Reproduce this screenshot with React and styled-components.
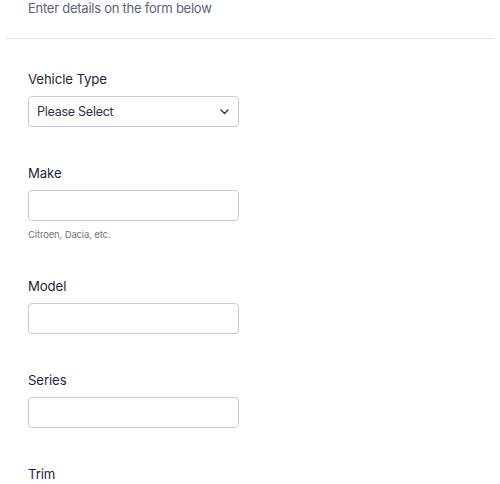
import React from 'react';
import styled, { createGlobalStyle } from 'styled-components';

const GlobalStyle = createGlobalStyle`
  * { box-sizing: border-box; }
  body {
    margin: 0;
    background: #fff;
    font-family: Inter, "Noto Sans", sans-serif;
    color: #2c3345;
  }
`;

const Page = styled.div`
  width: 500px;
`;

const Header = styled.div`
  padding: 0 28px;
  height: 38px;
`;

const Subtitle = styled.p`
  margin: 0;
  font-size: 13px;
  line-height: 16px;
  letter-spacing: -0.25px;
  color: #57647e;
`;

const Divider = styled.hr`
  margin: 0 6px;
  border: 0;
  border-top: 1px solid #e2e4ea;
`;

const Form = styled.div`
  display: flex;
  flex-direction: column;
  gap: 36px;
  padding: 30px 28px 0;
`;

const Field = styled.div`
  display: flex;
  flex-direction: column;
  width: 211px;
`;

const Label = styled.label`
  font-size: 13.2px;
  line-height: 20px;
  font-weight: 400;
  letter-spacing: -0.1px;
  color: #1f2638;
  margin-bottom: 7px;
`;

const Input = styled.input`
  height: 31px;
  width: 100%;
  border: 1px solid #c3cad8;
  border-radius: 4px;
  background: #fff;
  padding: 0 8px;
  font: inherit;
  font-size: 12.5px;
`;

const SelectBox = styled.div`
  height: 31px;
  border: 1px solid #c3cad8;
  border-radius: 4px;
  display: flex;
  align-items: center;
  justify-content: space-between;
  padding: 0 9px 0 8px;
  font-size: 12.5px;
  letter-spacing: -0.25px;
  color: #2c3345;
`;

const Helper = styled.span`
  margin-top: 8px;
  margin-bottom: -1px;
  font-size: 9.5px;
  line-height: 12px;
  letter-spacing: -0.15px;
  color: #6f7689;
`;

const Chevron = () => (
  <svg width="9" height="6" viewBox="0 0 9 6" fill="none">
    <path d="M1 1l3.5 3.5L8 1" stroke="#2c3345" strokeWidth="1.4" strokeLinecap="round" strokeLinejoin="round" />
  </svg>
);

const fields = [
  { label: 'Make', helper: 'Citroen, Dacia, etc.' },
  { label: 'Model' },
  { label: 'Series' },
  { label: 'Trim' },
];

export default function App() {
  return (
    <Page>
      <GlobalStyle />
      <Header>
        <Subtitle>Enter details on the form below</Subtitle>
      </Header>
      <Divider />
      <Form>
        <Field>
          <Label>Vehicle Type</Label>
          <SelectBox>
            <span>Please Select</span>
            <Chevron />
          </SelectBox>
        </Field>
        {fields.map((f) => (
          <Field key={f.label}>
            <Label>{f.label}</Label>
            <Input type="text" />
            {f.helper && <Helper>{f.helper}</Helper>}
          </Field>
        ))}
      </Form>
    </Page>
  );
}
